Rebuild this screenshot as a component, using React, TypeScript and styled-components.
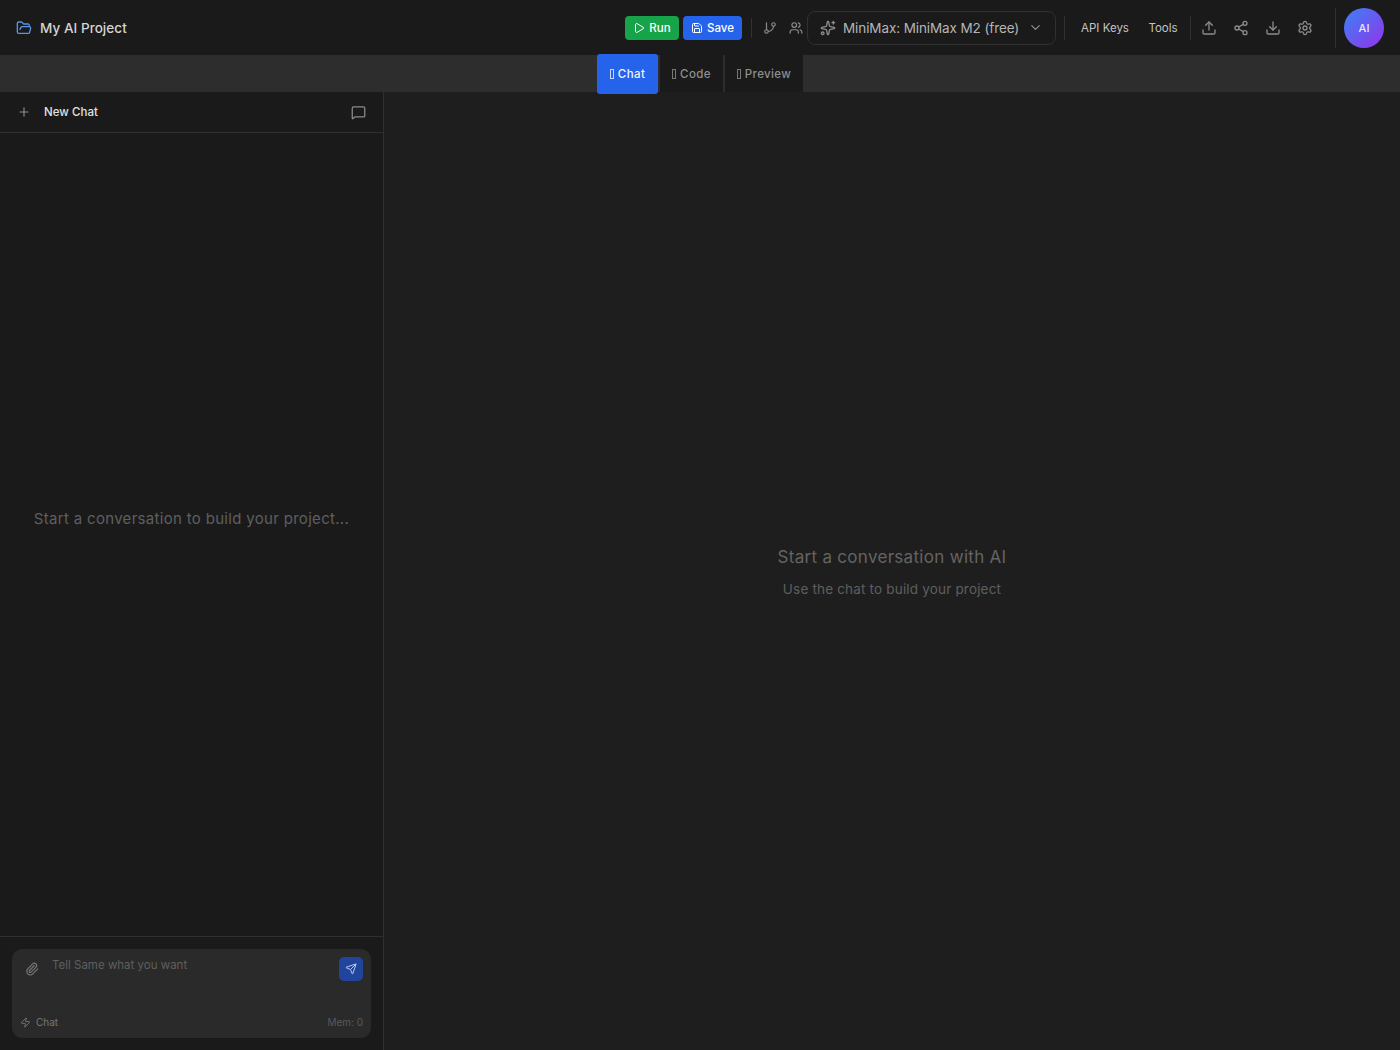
import React from "react";
import styled, { createGlobalStyle } from "styled-components";
import {
  ChevronDown, Download, FolderOpen, GitBranch, MessageSquare, Paperclip, Play, Plus, Save,
  Send, Settings, Share2, Sparkles, Upload, Users, Zap,
} from "lucide-react";

const Global = createGlobalStyle`
  html, body { margin: 0; padding: 0; height: 100%; background: #1e1e1e; }
  #root { height: 1050px; }
  * { box-sizing: border-box; }
  body { font-family: "Inter", "Noto Sans", sans-serif; }
`;

const Page = styled.div`
  width: 1400px; height: 1050px; display: flex; flex-direction: column; overflow: hidden;
  background: #1e1e1e; color: #d4d4d4;
`;
const Header = styled.header`
  height: 55px; flex: none; display: flex; align-items: center; background: #1a1a1a;
  padding: 0 16px;
`;
const Project = styled.div`
  display: flex; align-items: center; gap: 8px; font-size: 13.5px; font-weight: 500; color: #d4d4d4; letter-spacing: 0.05px;
  svg { color: #5b93e6; }
`;
const Actions = styled.div`
  margin-left: auto; display: flex; align-items: center; height: 100%;
`;
const ActionButton = styled.button<{ $bg: string; $w: number }>`
  height: 24px; width: ${p => p.$w}px; margin-right: 4px; border: 0; border-radius: 4px;
  background: ${p => p.$bg}; color: #fff; font: 500 11.5px "Inter", sans-serif;
  display: flex; align-items: center; justify-content: center; gap: 4px; padding: 0;
`;
const Rule = styled.span<{ $h?: number; $ml?: number; $mr?: number }>`
  width: 1px; height: ${p => p.$h ?? 24}px; background: #303030; flex: none;
  margin-left: ${p => p.$ml ?? 0}px; margin-right: ${p => p.$mr ?? 0}px;
`;
const IconSlot = styled.span<{ $w: number }>`
  width: ${p => p.$w}px; display: flex; align-items: center; justify-content: center; color: #8c8c8c; flex: none;
`;
const ModelSelect = styled.div`
  width: 249px; height: 34px; flex: none; border: 1px solid #303030; border-radius: 8px; background: #1a1a1a;
  display: flex; align-items: center; padding: 0 12px 0 12px; color: #b5b5b5; font-size: 13.5px;
  svg { color: #8c8c8c; flex: none; }
  span { margin-left: 7px; flex: 1; white-space: nowrap; letter-spacing: -0.1px; }
`;
const TextLink = styled.span<{ $w: number }>`
  width: ${p => p.$w}px; text-align: center; font-size: 11.5px; color: #c4c4c4; flex: none; white-space: nowrap;
`;
const Avatar = styled.div`
  width: 40px; height: 40px; border-radius: 50%; flex: none; margin-left: 8px;
  background: linear-gradient(135deg, #3b82f6, #9333ea); color: #e8e8f8;
  display: flex; align-items: center; justify-content: center; font-size: 11px; font-weight: 500;
`;
const TabBar = styled.nav`
  height: 37px; flex: none; background: #2d2d2d; display: flex; justify-content: center; position: relative;
  padding-right: 1px;
`;
const Tab = styled.div<{ $active?: boolean; $w: number }>`
  width: ${p => p.$w}px; height: ${p => (p.$active ? 40 : 37)}px; margin-top: ${p => (p.$active ? -1 : 0)}px;
  background: ${p => (p.$active ? "#2563eb" : "#1a1a1a")}; border-radius: ${p => (p.$active ? "3px" : "0")};
  color: ${p => (p.$active ? "#f0f4ff" : "#8f8f8f")}; font-size: 11.5px; font-weight: 500; letter-spacing: 0.4px;
  display: flex; align-items: center; justify-content: center; gap: 4px; padding-left: 1px; position: relative; z-index: ${p => (p.$active ? 1 : 0)};
  & + & { border-left: ${p => (p.$active ? "0" : "2px solid #2d2d2d")}; }
`;
const Tofu = styled.i`
  display: inline-block; width: 4px; height: 10px; border: 1px solid currentColor; opacity: .8;
`;
const Body = styled.div`
  flex: 1; display: flex; min-height: 0;
`;
const Sidebar = styled.aside`
  width: 384px; flex: none; background: #1a1a1a; border-right: 1px solid #303030; display: flex; flex-direction: column;
`;
const NewChat = styled.div`
  height: 41px; flex: none; border-bottom: 1px solid #303030; display: flex; align-items: center;
  padding: 0 17px 0 17px; font-size: 11.5px; font-weight: 500; color: #e2e2e2; letter-spacing: 0.05px;
  svg { color: #8c8c8c; }
  span { margin-left: 13px; flex: 1; }
`;
const EmptyChat = styled.div`
  flex: 1; display: flex; align-items: center; justify-content: center; font-size: 15px; color: #5f5f5f;
  padding-bottom: 33px; letter-spacing: 0.31px;
`;
const Composer = styled.div`
  height: 114px; flex: none; border-top: 1px solid #303030; padding: 12px 12px 12px;
`;
const InputBox = styled.div`
  height: 89px; background: #2a2a2a; border-radius: 10px; padding: 9px 8px 9px; display: flex; flex-direction: column;
`;
const InputRow = styled.div`
  flex: 1; display: flex; align-items: flex-start;
`;
const Clip = styled.span`
  width: 24px; margin-top: 4px; margin-left: 0; color: #777; display: flex; justify-content: center; flex: none;
`;
const Placeholder = styled.span`
  flex: 1; margin-left: 8px; font-size: 11.5px; color: #5f5f5f; line-height: 14px;
`;
const SendButton = styled.span`
  width: 24px; height: 24px; margin-top: -1px; border-radius: 5px; background: #21449c; color: #b9c8ec;
  display: flex; align-items: center; justify-content: center; flex: none;
`;
const InputFoot = styled.div`
  display: flex; align-items: center; font-size: 10px; color: #777; height: 14px;
  svg { margin-right: 5px; }
  em { margin-left: auto; font-style: normal; color: #5a5a5a; }
`;
const Main = styled.main`
  flex: 1; display: flex; flex-direction: column; align-items: center; justify-content: center; padding-top: 1px; background: #1e1e1e;
`;
const Title = styled.div`
  font-size: 17px; color: #646464; line-height: 24px; letter-spacing: 0.3px;
`;
const Subtitle = styled.div`
  font-size: 13.5px; color: #5e5e5e; margin-top: 10px; line-height: 20px; letter-spacing: 0.18px;
`;

export default function App() {
  return (
    <Page>
      <Global />
      <Header>
        <Project><FolderOpen size={16} /> My AI Project</Project>
        <Actions>
          <ActionButton $bg="#16a34a" $w={54}><Play size={12} /> Run</ActionButton>
          <ActionButton $bg="#2563eb" $w={59}><Save size={12} /> Save</ActionButton>
          <Rule $h={20} $ml={5} />
          <IconSlot $w={36}><GitBranch size={14} /></IconSlot>
          <IconSlot $w={16}><Users size={14} /></IconSlot>
          <IconSlot $w={3} />
          <ModelSelect><Sparkles size={16} /><span>MiniMax: MiniMax M2 (free)</span><ChevronDown size={15} /></ModelSelect>
          <Rule $h={24} $ml={8} $mr={4} />
          <TextLink $w={72}>API Keys</TextLink>
          <TextLink $w={44}>Tools</TextLink>
          <Rule $h={24} $ml={5} />
          <IconSlot $w={36}><Upload size={16} /></IconSlot>
          <IconSlot $w={28}><Share2 size={16} /></IconSlot>
          <IconSlot $w={36}><Download size={16} /></IconSlot>
          <IconSlot $w={28}><Settings size={16} /></IconSlot>
          <Rule $h={40} $ml={16} />
          <Avatar>AI</Avatar>
        </Actions>
      </Header>
      <TabBar>
        <Tab $active $w={61}><Tofu /> Chat</Tab>
        <Tab $w={65}><Tofu /> Code</Tab>
        <Tab $w={80}><Tofu /> Preview</Tab>
      </TabBar>
      <Body>
        <Sidebar>
          <NewChat><Plus size={14} /><span>New Chat</span><MessageSquare size={15} /></NewChat>
          <EmptyChat>Start a conversation to build your project...</EmptyChat>
          <Composer>
            <InputBox>
              <InputRow>
                <Clip><Paperclip size={14} /></Clip>
                <Placeholder>Tell Same what you want</Placeholder>
                <SendButton><Send size={12} /></SendButton>
              </InputRow>
              <InputFoot><Zap size={11} />Chat<em>Mem: 0</em></InputFoot>
            </InputBox>
          </Composer>
        </Sidebar>
        <Main>
          <Title>Start a conversation with AI</Title>
          <Subtitle>Use the chat to build your project</Subtitle>
        </Main>
      </Body>
    </Page>
  );
}
